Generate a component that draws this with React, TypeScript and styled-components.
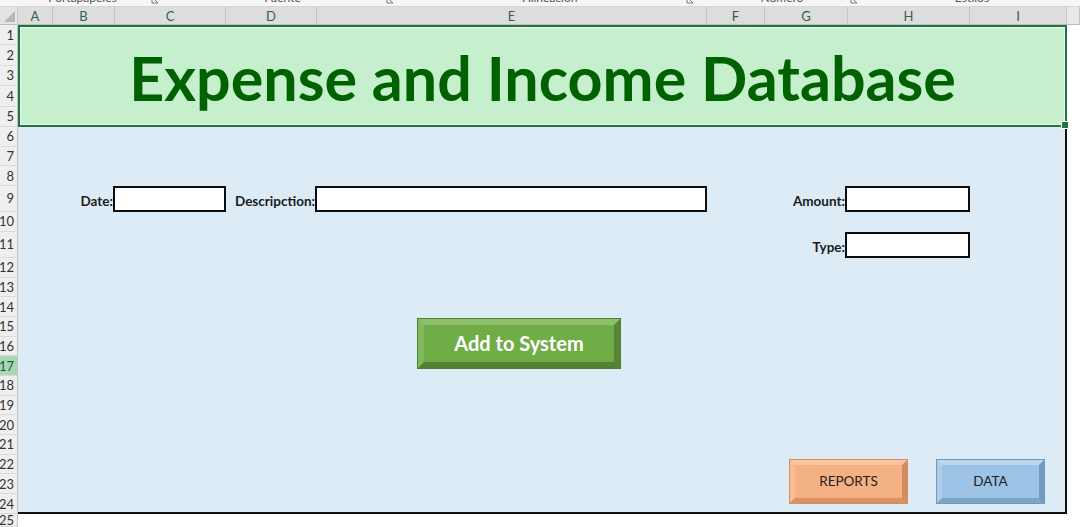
import React from 'react';
import styled, { createGlobalStyle } from 'styled-components';

const GlobalStyle = createGlobalStyle`
  html, body, #root {
    margin: 0;
    height: 100%;
  }
  body {
    font-family: Lato, "Liberation Sans", sans-serif;
    background: #ffffff;
    overflow: hidden;
  }
`;

const COLUMNS = [
  { name: 'A', width: 35 },
  { name: 'B', width: 62 },
  { name: 'C', width: 111 },
  { name: 'D', width: 91 },
  { name: 'E', width: 390 },
  { name: 'F', width: 58 },
  { name: 'G', width: 83 },
  { name: 'H', width: 122 },
  { name: 'I', width: 97 },
];

const ROW_HEIGHTS = [
  20.4, 20.4, 20.4, 20.4, 20.4,
  19.67, 19.67, 19.67,
  26, 20, 26,
  19.7, 19.7, 19.7, 19.7, 19.7, 19.7, 19.7, 19.7, 19.7, 19.7, 19.7, 19.7, 19.7,
];

const RIBBON_GROUPS = [
  { label: 'Portapapeles', width: 165, launcher: true },
  { label: 'Fuente', width: 235, launcher: true },
  { label: 'Alineación', width: 300, launcher: true },
  { label: 'Número', width: 164, launcher: true },
  { label: 'Estilos', width: 216, launcher: false },
];

const TONES = {
  green: { face: '#70ad47', top: '#8fc16d', left: '#80b95b', right: '#558636', bottom: '#548233', outline: '#507e31', text: '#ffffff' },
  orange: { face: '#f4b183', top: '#f8c6a3', left: '#f6bc93', right: '#cf8d60', bottom: '#d59366', outline: '#d98e5c', text: '#222222' },
  blue: { face: '#9dc3e6', top: '#bcd6ee', left: '#b0cce9', right: '#7499bf', bottom: '#7ea2c8', outline: '#7098c3', text: '#222222' },
};

type Tone = keyof typeof TONES;

// sheet rows start on grid line 2 (line 1 is the column header)
const gridRow = (first: number, last = first) => `${first + 1} / ${last + 2}`;
const gridCol = (first: number, last = first) => `${first + 2} / ${last + 3}`;

const Page = styled.div`
  height: 100%;
  display: grid;
  grid-template-rows: 7px 1fr;
`;

const Ribbon = styled.div`
  display: flex;
  background: #f6f6f6;
  border-bottom: 1px solid #d6d6d6;
  overflow: hidden;
`;

const RibbonGroup = styled.div<{ $width: number }>`
  width: ${(p) => p.$width}px;
  flex: none;
  display: flex;
  justify-content: center;
  position: relative;
  font-size: 12px;
  color: #555;
`;

const RibbonLabel = styled.span`
  margin-top: -9px;
  line-height: 14px;
`;

const Launcher = styled.svg`
  position: absolute;
  right: 6px;
  top: -4px;
`;

const Sheet = styled.div`
  display: grid;
  grid-template-columns: 18px ${COLUMNS.map((c) => `${c.width}px`).join(' ')} 1fr;
  grid-template-rows: 18px ${ROW_HEIGHTS.map((h) => `${h}px`).join(' ')} 1fr;
  overflow: hidden;
`;

const Corner = styled.div`
  grid-column: 1;
  grid-row: 1;
  background: #e4e4e4;
  border-right: 1px solid #c8c8c8;
  border-bottom: 1px solid #bdbdbd;
  display: flex;
  align-items: flex-end;
  justify-content: flex-end;
  padding: 0 2px 2px 0;
  box-sizing: border-box;
`;

const ColHeader = styled.div<{ $col: number; $selected?: boolean }>`
  grid-column: ${(p) => p.$col + 2};
  grid-row: 1;
  background: ${(p) => (p.$selected ? '#dddddd' : '#e9e9e9')};
  border-right: 1px solid #c4c4c4;
  border-bottom: 1px solid #bdbdbd;
  box-sizing: border-box;
  display: flex;
  align-items: center;
  justify-content: center;
  font-size: 13px;
  color: ${(p) => (p.$selected ? '#2c6446' : '#444')};
`;

const RowHeader = styled.div<{ $row: number; $active?: boolean }>`
  grid-column: 1;
  grid-row: ${(p) => p.$row + 1};
  background: ${(p) => (p.$active ? '#a9d6b6' : '#efefef')};
  border-right: 1px solid #c4c4c4;
  border-bottom: 1px solid #d9d9d9;
  box-sizing: border-box;
  display: flex;
  align-items: center;
  justify-content: flex-end;
  padding-right: 3px;
  overflow: hidden;
  white-space: nowrap;
  font-size: 13px;
  color: ${(p) => (p.$active ? '#1d5e39' : '#333')};
`;

const TitleBand = styled.div`
  grid-column: ${gridCol(0, 8)};
  grid-row: ${gridRow(1, 5)};
  position: relative;
  background: #c6efce;
  border: 2px solid #217346;
  box-shadow: inset 0 0 0 1px #e9f7ec;
  box-sizing: border-box;
  display: flex;
  align-items: center;
  justify-content: center;
  z-index: 1;
`;

const Title = styled.h1`
  margin: 4px 0 0;
  font-size: 61px;
  font-weight: 700;
  color: #006100;
  white-space: nowrap;
`;

const FillHandle = styled.span`
  position: absolute;
  right: -4px;
  bottom: -4px;
  width: 6px;
  height: 6px;
  background: #217346;
  border: 1px solid #ffffff;
`;

const FormPanel = styled.div`
  grid-column: ${gridCol(0, 8)};
  grid-row: ${gridRow(6, 24)};
  background: #ddebf7;
  border-right: 2px solid #111;
  border-bottom: 2px solid #111;
  box-sizing: border-box;
`;

const FieldLabel = styled.div<{ $col: number; $row: number; $pad?: number }>`
  grid-column: ${(p) => gridCol(p.$col)};
  grid-row: ${(p) => gridRow(p.$row)};
  justify-self: end;
  align-self: center;
  padding: 5px ${(p) => p.$pad ?? 2}px 0 0;
  font-size: 13.5px;
  font-weight: 700;
  color: #1b1b1b;
  white-space: nowrap;
  z-index: 1;
`;

const FieldBox = styled.div<{ $col: number; $row: number; $shift?: number }>`
  grid-column: ${(p) => gridCol(p.$col)};
  grid-row: ${(p) => gridRow(p.$row)};
  margin-left: -${(p) => p.$shift ?? 2}px;
  background: #ffffff;
  border: 2px solid #0d0d0d;
  box-sizing: border-box;
  z-index: 1;
`;

const BevelButton = styled.button<{ $tone: Tone; $width: number; $height: number; $bevel: number; $size: number; $bold?: boolean }>`
  width: ${(p) => p.$width}px;
  height: ${(p) => p.$height}px;
  box-sizing: border-box;
  padding: 0;
  background: ${(p) => TONES[p.$tone].face};
  border-style: solid;
  border-width: ${(p) => p.$bevel}px;
  border-top-color: ${(p) => TONES[p.$tone].top};
  border-left-color: ${(p) => TONES[p.$tone].left};
  border-right-color: ${(p) => TONES[p.$tone].right};
  border-bottom-color: ${(p) => TONES[p.$tone].bottom};
  box-shadow: 0 0 0 1px ${(p) => TONES[p.$tone].outline};
  font-family: Lato, "Liberation Sans", sans-serif;
  font-size: ${(p) => p.$size}px;
  font-weight: ${(p) => (p.$bold ? 700 : 400)};
  color: ${(p) => TONES[p.$tone].text};
  cursor: pointer;
`;

const AddSlot = styled.div`
  grid-column: ${gridCol(4)};
  grid-row: ${gridRow(15, 17)};
  padding: 2px 0 0 101px;
  z-index: 1;
`;

const NavBar = styled.div`
  grid-column: ${gridCol(6, 8)};
  grid-row: ${gridRow(22, 24)};
  display: flex;
  align-items: flex-start;
  gap: 30px;
  padding: 5px 0 0 25px;
  z-index: 1;
`;

export default function App() {
  return (
    <>
      <GlobalStyle />
      <Page>
        <Ribbon>
          {RIBBON_GROUPS.map((g) => (
            <RibbonGroup key={g.label} $width={g.width}>
              <RibbonLabel>{g.label}</RibbonLabel>
              {g.launcher && (
                <Launcher width="8" height="8" viewBox="0 0 8 8">
                  <path d="M1 1v6h6M3 3l4 4" fill="none" stroke="#777" strokeWidth="1" />
                </Launcher>
              )}
            </RibbonGroup>
          ))}
        </Ribbon>

        <Sheet>
          <Corner>
            <svg width="11" height="11" viewBox="0 0 11 11">
              <polygon points="11,0 11,11 0,11" fill="#b7b7b7" />
            </svg>
          </Corner>
          {COLUMNS.map((c, i) => (
            <ColHeader key={c.name} $col={i} $selected>
              {c.name}
            </ColHeader>
          ))}
          <ColHeader $col={COLUMNS.length} />
          {[...ROW_HEIGHTS, 0].map((_, i) => (
            <RowHeader key={i} $row={i + 1} $active={i + 1 === 17}>
              {i + 1}
            </RowHeader>
          ))}

          <TitleBand>
            <Title>Expense and Income Database</Title>
            <FillHandle />
          </TitleBand>

          <FormPanel />

          <FieldLabel $col={1} $row={9}>Date:</FieldLabel>
          <FieldBox $col={2} $row={9} />
          <FieldLabel $col={3} $row={9}>Descripction:</FieldLabel>
          <FieldBox $col={4} $row={9} />
          <FieldLabel $col={6} $row={9} $pad={3}>Amount:</FieldLabel>
          <FieldBox $col={7} $row={9} $shift={3} />
          <FieldLabel $col={6} $row={11} $pad={3}>Type:</FieldLabel>
          <FieldBox $col={7} $row={11} $shift={3} />

          <AddSlot>
            <BevelButton $tone="green" $width={202} $height={49} $bevel={6} $size={20} $bold>
              Add to System
            </BevelButton>
          </AddSlot>

          <NavBar>
            <BevelButton $tone="orange" $width={117} $height={43} $bevel={5} $size={13.5}>
              REPORTS
            </BevelButton>
            <BevelButton $tone="blue" $width={107} $height={43} $bevel={5} $size={13.5}>
              DATA
            </BevelButton>
          </NavBar>
        </Sheet>
      </Page>
    </>
  );
}
